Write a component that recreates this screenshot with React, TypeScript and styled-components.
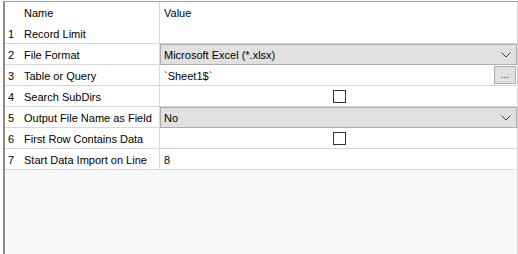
import React from 'react'
import styled, { createGlobalStyle } from 'styled-components'

const GlobalStyle = createGlobalStyle`
  html, body {
    margin: 0;
    padding: 0;
    background: #ffffff;
  }
  body {
    font-family: 'Liberation Sans', Arial, sans-serif;
    font-size: 11px;
    color: #000000;
  }
`

const Page = styled.div`
  width: 518px;
  height: 254px;
  padding: 1px 0 0 3px;
  box-sizing: border-box;
  background: #ffffff;
`

const Frame = styled.div`
  height: 100%;
  box-sizing: border-box;
  border-top: 1px solid #a0a0a0;
  border-left: 2px solid #8c8c8c;
  border-right: 1px solid #d4d4d4;
  background: #f8f9fa;
  display: flex;
  flex-direction: column;
`

const Grid = styled.div`
  display: grid;
  grid-template-columns: 14px 140px 1fr;
  background: #ffffff;
`

const HeaderCell = styled.div<{ $divider?: boolean }>`
  height: 21px;
  padding: 5px 0 0 ${(p) => (p.$divider ? '4px' : '5px')};
  box-sizing: border-box;
  border-left: ${(p) => (p.$divider ? '1px solid #d8d8d8' : 'none')};
`

const IndexCell = styled.div`
  height: 21px;
  box-sizing: border-box;
  border-bottom: 1px solid #d8d8d8;
  padding: 5px 0 0 3px;
`

const NameCell = styled.div`
  height: 21px;
  box-sizing: border-box;
  border-bottom: 1px solid #d8d8d8;
  padding: 5px 0 0 5px;
  white-space: nowrap;
`

const ValueCell = styled.div`
  position: relative;
  height: 21px;
  box-sizing: border-box;
  border-bottom: 1px solid #d8d8d8;
  border-left: 1px solid #d8d8d8;
  padding: 5px 0 0 4px;
  display: flex;
  align-items: flex-start;
`

const DropBox = styled.div`
  flex: 1;
  height: 21px;
  margin: -5px 0 0 -4px;
  box-sizing: border-box;
  background: #e1e1e1;
  border: 1px solid #adadad;
  display: flex;
  align-items: center;
  justify-content: space-between;
  padding: 1px 5px 0 3px;
`

const Ellipsis = styled.div`
  position: absolute;
  right: 1px;
  top: 1px;
  width: 22px;
  height: 18px;
  box-sizing: border-box;
  background: #e1e1e1;
  border: 1px solid #adadad;
  font-size: 10px;
  color: #6a2a8a;
  display: flex;
  align-items: center;
  justify-content: center;
  padding-bottom: 2px;
`

const CheckWrap = styled.div`
  flex: 1;
  display: flex;
  justify-content: center;
  margin-top: -1px;
  padding-right: 2px;
`

const Check = styled.div`
  width: 13px;
  height: 13px;
  box-sizing: border-box;
  border: 1px solid #333333;
  background: #ffffff;
`

type Kind = 'text' | 'drop' | 'file' | 'check'

interface Row {
  name: string
  kind: Kind
  value?: string
}

const rows: Row[] = [
  { name: 'Record Limit', kind: 'text', value: '' },
  { name: 'File Format', kind: 'drop', value: 'Microsoft Excel (*.xlsx)' },
  { name: 'Table or Query', kind: 'file', value: '`Sheet1$`' },
  { name: 'Search SubDirs', kind: 'check' },
  { name: 'Output File Name as Field', kind: 'drop', value: 'No' },
  { name: 'First Row Contains Data', kind: 'check' },
  { name: 'Start Data Import on Line', kind: 'text', value: '8' },
]

const Chevron = (): JSX.Element => (
  <svg width="10" height="6" viewBox="0 0 10 6">
    <path d="M0.5 0.5 L5 5 L9.5 0.5" fill="none" stroke="#444" strokeWidth="1" />
  </svg>
)

const renderValue = (row: Row): JSX.Element => {
  switch (row.kind) {
    case 'drop':
      return (
        <DropBox>
          <span>{row.value}</span>
          <Chevron />
        </DropBox>
      )
    case 'file':
      return (
        <>
          <span>{row.value}</span>
          <Ellipsis>...</Ellipsis>
        </>
      )
    case 'check':
      return (
        <CheckWrap>
          <Check />
        </CheckWrap>
      )
    default:
      return <span>{row.value}</span>
  }
}

const App = (): JSX.Element => {
  return (
    <Page>
      <GlobalStyle />
      <Frame>
        <Grid>
          <HeaderCell />
          <HeaderCell>Name</HeaderCell>
          <HeaderCell $divider>Value</HeaderCell>
          {rows.map((row, i) => (
            <React.Fragment key={row.name}>
              <IndexCell>{i + 1}</IndexCell>
              <NameCell>{row.name}</NameCell>
              <ValueCell>{renderValue(row)}</ValueCell>
            </React.Fragment>
          ))}
        </Grid>
      </Frame>
    </Page>
  )
}

export default App
